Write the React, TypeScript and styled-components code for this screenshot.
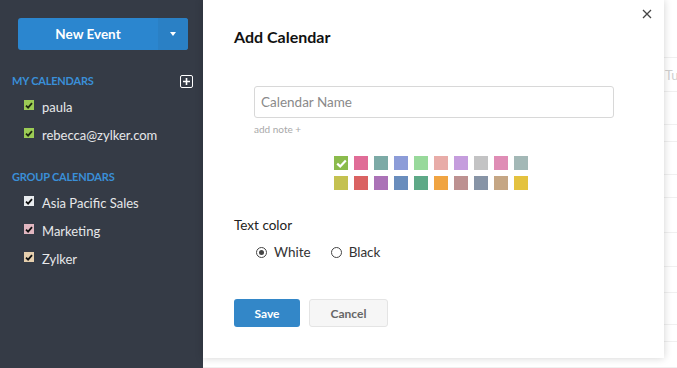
import styled, { createGlobalStyle } from "styled-components";

const GlobalStyle = createGlobalStyle`
    html, body {
        margin: 0;
        padding: 0;
        height: 100%;
        overflow: hidden;
    }
    body {
        font-family: Lato, "Open Sans", sans-serif;
    }
    #root {
        height: 100%;
    }
`

const myCalendars = [
    {name: "paula", color: "#9ccc55", tick: "#1f2a10"},
    {name: "rebecca@zylker.com", color: "#9ccc55", tick: "#1f2a10"},
]

const groupCalendars = [
    {name: "Asia Pacific Sales", color: "#e9ecef", tick: "#111"},
    {name: "Marketing", color: "#e2b7c1", tick: "#111"},
    {name: "Zylker", color: "#e6cfae", tick: "#111"},
]

const swatches = [
    "#8bbb4c", "#e06c97", "#7caaa6", "#8c9cd8", "#98d99b", "#e8aca8", "#c59ddd", "#c3c3c4", "#df8db5", "#a3b8b6",
    "#c4c150", "#da6262", "#ab72b7", "#698dbd", "#5ea987", "#f0a442", "#bd9191", "#8794a6", "#c5a684", "#e4c23f",
]

const gridRows = [58, 34, 33, 17, 33, 23, 35, 34, 26, 32, 17, 26]

const Check = ({color}: { color: string }) => (
    <svg width="8" height="7" viewBox="0 0 8 7">
        <path d="M1 3.6 L3.1 5.6 L7 1.2" fill="none" stroke={color} strokeWidth="1.8"/>
    </svg>
)

export default function App() {
    return (
        <>
            <GlobalStyle/>
            <Page>
                <Sidebar>
                    <NewEventButton>
                        <NewEventLabel>New Event</NewEventLabel>
                        <DropPart>
                            <Caret/>
                        </DropPart>
                    </NewEventButton>

                    <SectionHead>
                        <SectionTitle>MY CALENDARS</SectionTitle>
                        <AddBox>
                            <svg width="9" height="9" viewBox="0 0 9 9">
                                <path d="M4.5 1 V8 M1 4.5 H8" stroke="#fff" strokeWidth="1.6"/>
                            </svg>
                        </AddBox>
                    </SectionHead>
                    <CalList>
                        {myCalendars.map(c => (
                            <CalItem key={c.name}>
                                <CalBox $color={c.color}><Check color={c.tick}/></CalBox>
                                {c.name}
                            </CalItem>
                        ))}
                    </CalList>

                    <SectionHead $top={20}>
                        <SectionTitle>GROUP CALENDARS</SectionTitle>
                    </SectionHead>
                    <CalList>
                        {groupCalendars.map(c => (
                            <CalItem key={c.name}>
                                <CalBox $color={c.color}><Check color={c.tick}/></CalBox>
                                {c.name}
                            </CalItem>
                        ))}
                    </CalList>
                </Sidebar>

                <Main>
                    <Grid>
                        {gridRows.map((h, i) => (
                            <GridRow key={i} $h={h}>{i === 1 ? <DayLabel>Tu</DayLabel> : null}</GridRow>
                        ))}
                    </Grid>
                    <BottomBar/>

                    <Modal>
                        <Close>
                            <svg width="10" height="10" viewBox="0 0 10 10">
                                <path d="M1 1 L9 9 M9 1 L1 9" stroke="#444" strokeWidth="1.3"/>
                            </svg>
                        </Close>
                        <Title>Add Calendar</Title>

                        <Form>
                            <NameInput placeholder="Calendar Name"/>
                            <AddNote>add note +</AddNote>
                            <Swatches>
                                {swatches.map((c, i) => (
                                    <Swatch key={i} $color={c}>
                                        {i === 0 ? (
                                            <svg width="11" height="9" viewBox="0 0 11 9">
                                                <path d="M1.2 4.6 L4.2 7.4 L9.8 1.4" fill="none" stroke="#fff"
                                                      strokeWidth="2.2"/>
                                            </svg>
                                        ) : null}
                                    </Swatch>
                                ))}
                            </Swatches>
                        </Form>

                        <FieldLabel>Text color</FieldLabel>
                        <RadioRow>
                            <RadioOption>
                                <Radio $checked/>
                                White
                            </RadioOption>
                            <RadioOption>
                                <Radio/>
                                Black
                            </RadioOption>
                        </RadioRow>

                        <Actions>
                            <SaveButton>Save</SaveButton>
                            <CancelButton>Cancel</CancelButton>
                        </Actions>
                    </Modal>
                </Main>
            </Page>
        </>
    );
}

const Page = styled.div`
    display: flex;
    width: 677px;
    height: 368px;
    overflow: hidden;
`
const Sidebar = styled.aside`
    width: 203px;
    flex-shrink: 0;
    background: #353b46;
    padding: 18px 0 0 0;
    box-sizing: border-box;
`
const NewEventButton = styled.div`
    display: flex;
    margin: 0 15px 0 18px;
    height: 32px;
    border-radius: 3px;
    background: #2b86cf;
    overflow: hidden;
`
const NewEventLabel = styled.div`
    flex: 1;
    display: flex;
    align-items: center;
    justify-content: center;
    color: #fff;
    font-weight: 700;
    font-size: 13.5px;
`
const DropPart = styled.div`
    width: 30px;
    display: flex;
    align-items: center;
    justify-content: center;
    background: #2a80c5;
`
const Caret = styled.span`
    width: 0;
    height: 0;
    border-left: 3.5px solid transparent;
    border-right: 3.5px solid transparent;
    border-top: 4px solid #fff;
`
const SectionHead = styled.div<{ $top?: number }>`
    display: flex;
    align-items: center;
    justify-content: space-between;
    margin-top: ${p => p.$top ?? 23}px;
    padding: 0 10px 0 12px;
    height: 14px;
`
const SectionTitle = styled.span`
    color: #3a8fd8;
    font-size: 11px;
    font-weight: 700;
    letter-spacing: -0.2px;
`
const AddBox = styled.span`
    width: 11px;
    height: 11px;
    border: 1.3px solid #fff;
    border-radius: 2px;
    display: flex;
    align-items: center;
    justify-content: center;
    margin-top: 3px;
`
const CalList = styled.ul`
    list-style: none;
    margin: 6px 0 0;
    padding: 0 0 0 24px;
`
const CalItem = styled.li`
    display: flex;
    align-items: center;
    gap: 8px;
    height: 28px;
    color: #e7e8ea;
    font-size: 13px;
`
const CalBox = styled.span<{ $color: string }>`
    width: 10px;
    height: 10px;
    background: ${p => p.$color};
    display: flex;
    align-items: center;
    justify-content: center;
    margin-top: -4px;
`
const Main = styled.main`
    flex: 1;
    position: relative;
    background: #fff;
    display: flex;
    flex-direction: column;
`
const Grid = styled.div`
    flex: 1;
`
const GridRow = styled.div<{ $h: number }>`
    height: ${p => p.$h}px;
    border-bottom: 1px solid #f0f0f0;
    box-sizing: border-box;
    display: flex;
    align-items: center;
    justify-content: flex-end;
`
const DayLabel = styled.span`
    color: #cfcfcf;
    font-size: 13px;
    width: 12px;
    white-space: nowrap;
`
const BottomBar = styled.div`
    height: 10px;
    background: #ececec;
`
const Modal = styled.section`
    position: absolute;
    left: 0;
    top: 0;
    width: 461px;
    height: 358px;
    background: #fff;
    box-shadow: 0 0 8px rgba(0, 0, 0, 0.18);
    padding: 27px 0 0 31px;
    box-sizing: border-box;
`
const Close = styled.span`
    position: absolute;
    top: 9px;
    right: 12px;
    display: flex;
`
const Title = styled.h2`
    margin: 0;
    font-size: 16px;
    font-weight: 700;
    color: #111;
    line-height: 20px;
`
const Form = styled.div`
    display: flex;
    flex-direction: column;
    width: 360px;
    margin: 39px 0 0 20px;
`
const NameInput = styled.input`
    height: 32px;
    box-sizing: border-box;
    border: 1px solid #d8d8d8;
    border-radius: 3px;
    padding: 0 6px;
    font-family: Lato, sans-serif;
    font-size: 13.5px;
    color: #333;
    outline: none;

    &::placeholder {
        color: #8a8a8a;
    }
`
const AddNote = styled.span`
    font-size: 10px;
    color: #a9a9a9;
    margin-top: 5px;
    line-height: 12px;
`
const Swatches = styled.div`
    display: grid;
    grid-template-columns: repeat(10, 14px);
    gap: 6px;
    margin: 21px 0 0 80px;
`
const Swatch = styled.span<{ $color: string }>`
    width: 14px;
    height: 14px;
    background: ${p => p.$color};
    display: flex;
    align-items: center;
    justify-content: center;
`
const FieldLabel = styled.div`
    margin-top: 26px;
    font-size: 13.5px;
    color: #222;
    line-height: 18px;
`
const RadioRow = styled.div`
    display: flex;
    gap: 20px;
    margin: 10px 0 0 22px;
`
const RadioOption = styled.label`
    display: flex;
    align-items: center;
    gap: 7px;
    font-size: 13.5px;
    color: #333;
    line-height: 16px;
`
const Radio = styled.span<{ $checked?: boolean }>`
    width: 9px;
    height: 9px;
    border: 1px solid #444;
    border-radius: 50%;
    display: flex;
    align-items: center;
    justify-content: center;

    &::after {
        content: "";
        display: ${p => (p.$checked ? "block" : "none")};
        width: 5px;
        height: 5px;
        border-radius: 50%;
        background: #444;
    }
`
const Actions = styled.div`
    display: flex;
    gap: 9px;
    margin-top: 39px;
`
const SaveButton = styled.button`
    width: 66px;
    height: 28px;
    border: none;
    border-radius: 3px;
    background: #3387c8;
    color: #fff;
    font-family: Lato, sans-serif;
    font-weight: 700;
    font-size: 12px;
`
const CancelButton = styled.button`
    width: 79px;
    height: 28px;
    border: 1px solid #e4e4e4;
    border-radius: 3px;
    background: #f6f6f6;
    color: #666;
    font-family: Lato, sans-serif;
    font-weight: 700;
    font-size: 12px;
`
